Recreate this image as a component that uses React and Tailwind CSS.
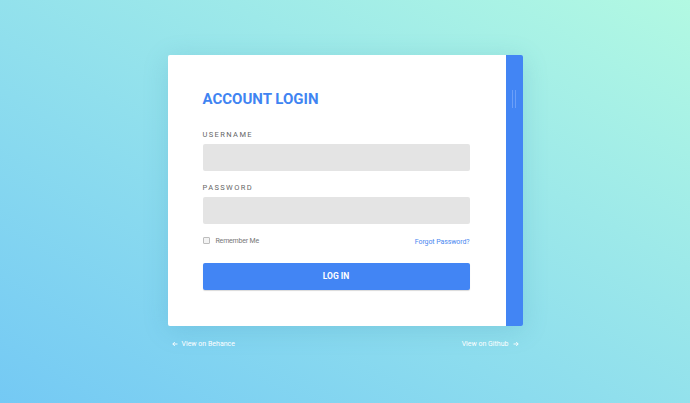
import React from "react";

const font = { fontFamily: "Roboto, 'Liberation Sans', sans-serif" };

const Arrow = ({ left }) => (
    <svg width="6" height="6" viewBox="0 0 6 6" fill="none" stroke="white" strokeWidth="0.9">
        {left ? (
            <path d="M5.5 3H0.8M2.8 1L0.8 3l2 2" />
        ) : (
            <path d="M0.5 3h4.7M3.2 1l2 2-2 2" />
        )}
    </svg>
);

export default function App() {
    return (
        <div
            className="w-[690px] h-[403px] bg-gradient-to-tr from-[#74c9f4] to-[#b2f9e2] flex flex-col items-center pt-[55px]"
            style={font}
        >
            <div className="flex w-[355px] h-[271px] shadow-[0_4px_24px_rgba(40,120,160,0.18)]">
                <div className="w-[338px] bg-white rounded-l-[2px] pl-[35px] pr-[36px] pt-[34px]">
                    {/* Title */}
                    <h1 className="text-[15px] leading-[20px] font-bold text-[#3f84f2]">
                        ACCOUNT LOGIN
                    </h1>

                    {/* Username */}
                    <label className="block mt-[20px] text-[7.5px] leading-[12px] tracking-[1.4px] text-[#666]">
                        USERNAME
                    </label>
                    <div className="mt-[3px] h-[27px] bg-[#e4e4e4] rounded-[2px]" />

                    {/* Password */}
                    <label className="block mt-[11px] text-[7.5px] leading-[12px] tracking-[1.4px] text-[#666]">
                        PASSWORD
                    </label>
                    <div className="mt-[3px] h-[27px] bg-[#e4e4e4] rounded-[2px]" />

                    {/* Remember / Forgot */}
                    <div className="flex items-center justify-between mt-[11px] h-[12px]">
                        <div className="flex items-center gap-[6px]">
                            <div className="w-[7px] h-[7px] border border-[#bdbdbd] rounded-[1px] bg-[#f3f3f3] -mt-[1px]" />
                            <span className="text-[7px] text-[#777] leading-[12px] tracking-[-0.2px]">Remember Me</span>
                        </div>
                        <span className="text-[7px] text-[#4a88f0] leading-[12px] mt-[1px] tracking-[-0.1px]">Forgot Password?</span>
                    </div>

                    {/* Button */}
                    <button className="mt-[16px] w-full h-[27px] bg-[#4285f4] rounded-[2px] text-white text-[8.5px] font-bold shadow-[0_1px_1px_rgba(0,0,0,0.15)]">
                        LOG IN
                    </button>
                </div>
                <div className="w-[17px] bg-[#4285f4] rounded-r-[2px] flex justify-center pt-[35px]">
                    <div className="flex gap-[2px] h-[18px] opacity-40">
                        <div className="w-px h-full bg-[#a8c8ff]" />
                        <div className="w-px h-full bg-[#a8c8ff]" />
                    </div>
                </div>
            </div>

            {/* Footer links */}
            <div className="w-[355px] flex justify-between mt-[12px] pl-[4px] pr-[4px] text-[7px] text-white leading-[12px]">
                <span className="flex items-center gap-[4px]">
                    <Arrow left />
                    View on Behance
                </span>
                <span className="flex items-center gap-[4px]">
                    View on Github
                    <Arrow />
                </span>
            </div>
        </div>
    );
}
